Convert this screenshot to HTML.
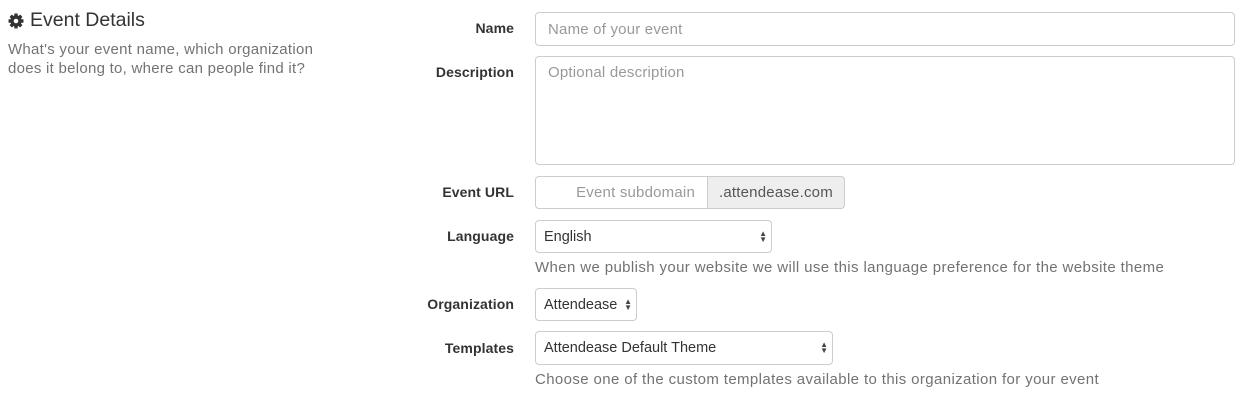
<!DOCTYPE html>
<html><head><style>
*{box-sizing:border-box;margin:0;padding:0}
body{width:1245px;height:405px;background:#fff;font-family:"Liberation Sans",sans-serif;color:#333;position:relative;overflow:hidden}
.a{position:absolute}
.lbl{position:absolute;right:731px;font-weight:bold;font-size:14px;letter-spacing:0.1px;color:#333;text-align:right;white-space:nowrap}
.box{position:absolute;border:1px solid #ccc;border-radius:4px;background:#fff;font-size:15px;letter-spacing:0.2px;padding:0 9px;display:flex;align-items:center;white-space:nowrap}
.sel{font-size:14.5px;letter-spacing:0;padding-left:8px}
.ph{color:#999}
.help{position:absolute;left:535px;font-size:15px;letter-spacing:0.38px;color:#737373;white-space:nowrap}
.arr{position:absolute;right:4px;top:50%;transform:translateY(-50%);font-size:8px;line-height:6px;color:#444;text-align:center}
</style></head><body>
<div class="a" style="left:8px;top:9px;font-size:19.5px;color:#333;display:flex;align-items:center">
<svg width="16" height="16" viewBox="0 0 16 16" style="margin-right:6px"><g fill="#333"><circle cx="8" cy="8" r="5.6"/><rect x="6.3" y="0.5" width="3.4" height="15" rx=".6"/><rect x="0.5" y="6.3" width="15" height="3.4" rx=".6"/><rect x="6.3" y="0.5" width="3.4" height="15" rx=".6" transform="rotate(45 8 8)"/><rect x="6.3" y="0.5" width="3.4" height="15" rx=".6" transform="rotate(-45 8 8)"/></g><circle cx="8" cy="8" r="2.3" fill="#fff"/></svg>Event Details</div>
<div class="a" style="left:8px;top:40px;font-size:15px;letter-spacing:0.27px;line-height:19px;color:#737373;white-space:nowrap">What's your event name, which organization<br>does it belong to, where can people find it?</div>

<div class="lbl" style="top:20px">Name</div>
<div class="box" style="left:535px;top:12px;width:700px;height:34px;padding-left:12px"><span class="ph">Name of your event</span></div>

<div class="lbl" style="top:64px">Description</div>
<div class="box" style="left:535px;top:56px;width:700px;height:109px;align-items:flex-start;padding-top:7px;padding-left:12px"><span class="ph">Optional description</span></div>

<div class="lbl" style="top:184px">Event URL</div>
<div class="box" style="left:535px;top:176px;width:173px;height:33px;border-radius:4px 0 0 4px;justify-content:flex-end;padding-right:12px"><span class="ph">Event subdomain</span></div>
<div class="box" style="left:707px;top:176px;width:138px;height:33px;border-radius:0 4px 4px 0;background:#eee;padding-left:11px;color:#555">.attendease.com</div>

<div class="lbl" style="top:228px">Language</div>
<div class="box sel" style="left:535px;top:220px;width:237px;height:33px">English<div class="arr">▲<br>▼</div></div>
<div class="help" style="top:259px">When we publish your website we will use this language preference for the website theme</div>

<div class="lbl" style="top:296px">Organization</div>
<div class="box sel" style="left:535px;top:288px;width:102px;height:33px">Attendease<div class="arr">▲<br>▼</div></div>

<div class="lbl" style="top:340px">Templates</div>
<div class="box sel" style="left:535px;top:331px;width:298px;height:34px">Attendease Default Theme<div class="arr">▲<br>▼</div></div>
<div class="help" style="top:371px">Choose one of the custom templates available to this organization for your event</div>
</body></html>
